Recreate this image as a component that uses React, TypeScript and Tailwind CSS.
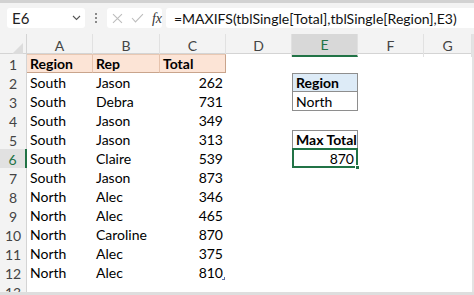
import React from 'react';

const font = { fontFamily: 'Lato, "Liberation Sans", sans-serif' };

const cols = ['A', 'B', 'C', 'D', 'E', 'F', 'G'];

const data: [string, string, string][] = [
  ['South', 'Jason', '262'],
  ['South', 'Debra', '731'],
  ['South', 'Jason', '349'],
  ['South', 'Jason', '313'],
  ['South', 'Claire', '539'],
  ['South', 'Jason', '873'],
  ['North', 'Alec', '346'],
  ['North', 'Alec', '465'],
  ['North', 'Caroline', '870'],
  ['North', 'Alec', '375'],
  ['North', 'Alec', '810'],
];

const gridCols = 'grid grid-cols-[27px_66px_67px_66px_66px_66px_66px_1fr]';

function RowHeader({ n }: { n: number }) {
  const active = n === 6;
  return (
    <div
      className={
        'flex items-center justify-center border-b border-[#e1e1e1] text-[14px] ' +
        (active
          ? 'bg-[#e1e1e1] text-[#217346] border-r-2 border-r-[#217346]'
          : 'bg-[#f3f3f3] text-[#444] border-r border-r-[#d4d4d4]')
      }
    >
      {n}
    </div>
  );
}

function Cell({ className = '', children }: { className?: string; children?: React.ReactNode }) {
  return (
    <div className={'relative min-w-0 h-[19px] flex items-center whitespace-nowrap px-[3px] text-[14px] text-black ' + className}>
      {children}
    </div>
  );
}

function SheetRow({ n }: { n: number }) {
  let a: React.ReactNode = null;
  let b: React.ReactNode = null;
  let c: React.ReactNode = null;
  let e: React.ReactNode = <Cell />;
  let cls = '';

  if (n === 1) {
    cls = 'bg-[#fce4d6] font-bold border-t border-b border-b-[#c9a48c] border-t-[#e8c8b3]';
    a = <Cell className={cls + ' border-r border-r-[#e6c3ad]'}>Region</Cell>;
    b = <Cell className={cls + ' border-r border-r-[#e6c3ad]'}>Rep</Cell>;
    c = <Cell className={cls + ' border-r border-r-[#c9a48c]'}>Total</Cell>;
  } else if (n <= 12) {
    const [r, p, t] = data[n - 2];
    a = <Cell>{r}</Cell>;
    b = <Cell>{p}</Cell>;
    c = (
      <Cell className="justify-end">
        {t}
        {n === 12 && (
          <span className="absolute right-[1px] bottom-[2px] h-[3px] w-[3px] border-r border-b border-[#5a6fa0]" />
        )}
      </Cell>
    );
  } else {
    a = <Cell />;
    b = <Cell />;
    c = <Cell />;
  }

  if (n === 2) {
    e = <Cell className="bg-[#ddebf7] font-bold border border-[#8e8e8e]">Region</Cell>;
  } else if (n === 3) {
    e = <Cell className="border-x border-b border-[#8e8e8e]">North</Cell>;
  } else if (n === 5) {
    e = <Cell className="font-bold border border-[#8e8e8e]">Max Total</Cell>;
  } else if (n === 6) {
    e = (
      <Cell className="justify-end border-x border-b border-[#8e8e8e]">
        870
        <span className="absolute -inset-[1px] border-2 border-[#217346]" />
        <span className="absolute -right-[3px] -bottom-[3px] h-[5px] w-[5px] bg-[#217346] border border-white" />
      </Cell>
    );
  }

  return (
    <div className={gridCols + ' h-[19px] shrink-0'}>
      <RowHeader n={n} />
      {a}
      {b}
      {c}
      <Cell />
      {e}
      <Cell />
      <Cell />
    </div>
  );
}

export default function App() {
  return (
    <div className="w-[474px] h-[295px] overflow-hidden bg-white flex flex-col" style={font}>
      {/* formula bar */}
      <div className="h-[3px] shrink-0 bg-[#d2d2d2]" />
      <div className="h-[31px] shrink-0 bg-[#f3f3f3] flex items-start pt-[5px] pl-[7px] gap-[4px]">
        <div className="w-[78px] h-[20px] bg-white rounded-[3px] flex items-center justify-between pl-[5px] pr-[4px]">
          <span className="text-[15px] text-[#222]">E6</span>
          <svg width="9" height="6" viewBox="0 0 9 6" fill="none" stroke="#555" strokeWidth="1.1">
            <path d="M1 1l3.5 3.5L8 1" />
          </svg>
        </div>
        <div className="w-[14px] h-[20px] flex flex-col items-center justify-center gap-[2px]">
          <span className="w-[2px] h-[2px] bg-[#666] rounded-full" />
          <span className="w-[2px] h-[2px] bg-[#666] rounded-full" />
          <span className="w-[2px] h-[2px] bg-[#666] rounded-full" />
        </div>
        <div className="w-[55px] h-[20px] bg-white rounded-[3px] flex items-center gap-[8px] pl-[5px]">
          <svg width="11" height="11" viewBox="0 0 11 11" stroke="#bdbdbd" strokeWidth="1.1">
            <path d="M1 1l9 9M10 1l-9 9" />
          </svg>
          <svg width="13" height="10" viewBox="0 0 13 10" fill="none" stroke="#bdbdbd" strokeWidth="1.1">
            <path d="M1 5l3.5 4L12 1" />
          </svg>
          <span className="text-[14px] italic text-[#333]" style={{ fontFamily: '"Liberation Serif", serif' }}>
            fx
          </span>
        </div>
        <div className="flex-1 h-[20px] bg-white rounded-l-[3px] flex items-center pl-[8px] text-[14px] text-[#111] whitespace-nowrap">
          =MAXIFS(tblSingle[Total],tblSingle[Region],E3)
        </div>
      </div>

      <div className="flex flex-1 overflow-hidden">
        <div className="flex-1 flex flex-col">
          {/* column headers */}
          <div className={gridCols + ' h-[20px] shrink-0 bg-[#f3f3f3] border-b border-[#d4d4d4]'}>
            <div className="relative border-r border-[#d4d4d4]">
              <span className="absolute right-[3px] bottom-[3px] w-0 h-0 border-l-[11px] border-l-transparent border-b-[11px] border-b-[#dcdcdc]" />
            </div>
            {cols.map((c) => (
              <div
                key={c}
                className={
                  'flex items-center justify-center text-[14px] border-r border-[#e1e1e1] ' +
                  (c === 'E' ? 'bg-[#d8d8d8] text-[#217346] border-b-2 border-b-[#217346]' : 'text-[#444]')
                }
              >
                {c}
              </div>
            ))}
          </div>
          {Array.from({ length: 13 }, (_, i) => (
            <SheetRow key={i} n={i + 1} />
          ))}
        </div>
        <div className="w-[2px] bg-[#e3e3e3]" />
      </div>
      <div className="h-[3px] shrink-0 bg-[#dedede]" />
    </div>
  );
}
